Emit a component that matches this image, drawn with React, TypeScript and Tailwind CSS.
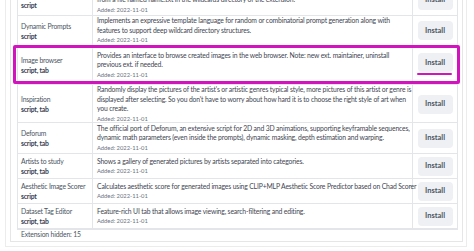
const ROWS = [
  {
    name: "Wildcards",
    type: "script",
    lines: [
      "Sample extension. Allows you to use __name__ syntax in your prompt to get a random line",
      "from a file named name.txt in the wildcards directory of the extension.",
    ],
    h: "h-[31px]",
    mark: false,
  },
  {
    name: "Dynamic Prompts",
    type: "script",
    lines: [
      "Implements an expressive template language for random or combinatorial prompt generation along with",
      "features to support deep wildcard directory structures.",
    ],
    h: "h-[30px]",
    mark: false,
  },
  {
    name: "Image browser",
    type: "script, tab",
    lines: [
      "Provides an interface to browse created images in the web browser. Note: new ext. maintainer, uninstall",
      "previous ext. if needed.",
    ],
    h: "h-[39px]",
    mark: true,
  },
  {
    name: "Inspiration",
    type: "script, tab",
    lines: [
      "Randomly display the pictures of the artist's or artistic genres typical style, more pictures of this artist or genre is",
      "displayed after selecting. So you don't have to worry about how hard it is to choose the right style of art when",
      "you create.",
    ],
    h: "h-[38px]",
    mark: false,
  },
  {
    name: "Deforum",
    type: "script, tab",
    lines: [
      "The official port of Deforum, an extensive script for 2D and 3D animations, supporting keyframable sequences,",
      "dynamic math parameters (even inside the prompts), dynamic masking, depth estimation and warping.",
    ],
    h: "h-[31px]",
    mark: false,
  },
  {
    name: "Artists to study",
    type: "script, tab",
    lines: ["Shows a gallery of generated pictures by artists separated into categories."],
    h: "h-[25px]",
    mark: false,
  },
  {
    name: "Aesthetic Image Scorer",
    type: "script",
    lines: [
      "Calculates aesthetic score for generated images using CLIP+MLP Aesthetic Score Predictor based on Chad Scorer",
    ],
    h: "h-[25px]",
    mark: false,
  },
  {
    name: "Dataset Tag Editor",
    type: "script, tab",
    lines: ["Feature-rich UI tab that allows image viewing, search-filtering and editing."],
    h: "h-[25px]",
    mark: false,
  },
];

export default function App() {
  return (
    <div className="relative h-[251px] w-[474px] overflow-hidden bg-white font-[Lato] text-[#374151]">
      {/* outer panel, top is scrolled out of view */}
      <div className="-mt-[15px] ml-[5px] w-[462px] border border-t-0 border-[#ececec] pr-[3px] pb-[4px] pl-[4px]">
        <div className="w-[453px] border border-t-0 border-[#e6e6e6] pl-[6px] pr-[4px]">
          <div className="w-[441px] border border-t-0 border-[#e3e5e8]">
            {ROWS.map((r) => (
              <div
                key={r.name}
                className={`grid grid-cols-[75px_320px_44px] border-b border-[#e3e5e8] ${r.h}`}
              >
                <div className="flex flex-col justify-center border-r border-[#e3e5e8] pl-[3px] text-[6.8px] leading-[10px] tracking-[-0.2px]">
                  <span className="whitespace-nowrap text-[#4b5563]">{r.name}</span>
                  <span className="whitespace-nowrap font-bold text-[#374151]">{r.type}</span>
                </div>
                <div className="flex flex-col justify-center border-r border-[#e3e5e8] pl-[4px] text-[6.8px] leading-[9.5px] tracking-[-0.15px]">
                  {r.lines.map((l) => (
                    <span key={l} className="whitespace-nowrap text-[#3f4652]">
                      {l}
                    </span>
                  ))}
                  <span className="whitespace-nowrap text-[5.8px] tracking-normal text-[#6b7280]">
                    Added: 2022-11-01
                  </span>
                </div>
                <div className={`flex justify-center ${r.mark ? "items-start pt-[7px]" : "items-center"}`}>
                  <button className="h-[19px] w-[35px] rounded-[4px] bg-[#eff0f3] text-[7.5px] font-bold text-[#4b5563]">
                    Install
                  </button>
                </div>
              </div>
            ))}
          </div>
          <div className="h-[11px] pl-[4px] text-[6.8px] leading-[9px] tracking-[-0.15px] text-[#4b5563]">
            Extension hidden: 15
          </div>
        </div>
      </div>

      {/* highlight drawn over the Image browser row */}
      <div className="absolute left-[13px] top-[45px] h-[39px] w-[447px] rounded-[2px] border-[3px] border-[#d214be]" />
      <div className="absolute left-[417px] top-[73px] h-[2px] w-[35px] rounded-full bg-[#d214be]" />
    </div>
  );
}
